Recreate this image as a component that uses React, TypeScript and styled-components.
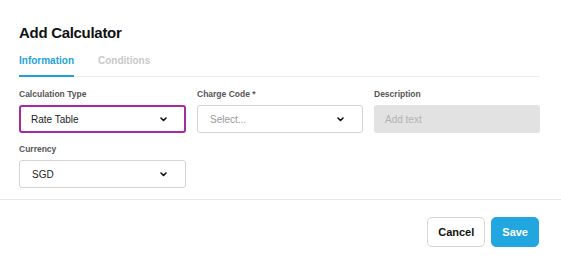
import React from 'react';
import styled, { createGlobalStyle } from 'styled-components';

const GlobalStyle = createGlobalStyle`
  body {
    margin: 0;
    background: #fff;
    font-family: "Liberation Sans", Arial, sans-serif;
  }
`;

const Modal = styled.div`
  width: 561px;
  height: 263px;
  background: #fff;
  display: flex;
  flex-direction: column;
`;

const Body = styled.div`
  padding: 23px 21px 0 19px;
  border-bottom: 1px solid #e6e6e6;
  height: 200px;
  box-sizing: border-box;
`;

const Title = styled.h1`
  margin: 0;
  font-size: 15px;
  letter-spacing: -0.3px;
  line-height: 20px;
  font-weight: 700;
  color: #111;
`;

const Tabs = styled.div`
  display: flex;
  gap: 24px;
  margin-top: 11px;
  border-bottom: 1px solid #ececec;
`;

const Tab = styled.div<{ $active?: boolean }>`
  font-size: 10px;
  font-weight: 700;
  line-height: 13px;
  padding-bottom: 8px;
  color: ${({ $active }) => ($active ? '#1ea2dc' : '#c9c9c9')};
  border-bottom: 2px solid ${({ $active }) => ($active ? '#1ea2dc' : 'transparent')};
  margin-bottom: -1px;
`;

const Grid = styled.div`
  display: grid;
  grid-template-columns: 167px 166px 166px;
  column-gap: 11px;
  row-gap: 11px;
  margin-top: 12px;
`;

const Field = styled.div`
  display: flex;
  flex-direction: column;
  gap: 5px;
`;

const Label = styled.label`
  font-size: 8.5px;
  font-weight: 700;
  line-height: 11px;
  color: #555;
`;

const SelectBox = styled.div<{ $focused?: boolean }>`
  height: 28px;
  box-sizing: border-box;
  display: flex;
  align-items: center;
  justify-content: space-between;
  padding: 0 ${({ $focused }) => ($focused ? '17px' : '18px')} 0 ${({ $focused }) => ($focused ? '10px' : '12px')};
  border: ${({ $focused }) => ($focused ? '2px solid #a42aa6' : '1px solid #d4d4d4')};
  border-radius: 3px;
  font-size: 10px;
  color: #1c1c1c;
  background: #fff;
`;

const Placeholder = styled.span`
  color: #9a9a9a;
`;

const TextInput = styled.div`
  height: 28px;
  box-sizing: border-box;
  display: flex;
  align-items: center;
  padding: 0 11px;
  border-radius: 3px;
  background: #e2e2e2;
  font-size: 10px;
  color: #b2b2b2;
`;

const Footer = styled.div`
  display: flex;
  justify-content: flex-end;
  gap: 6px;
  padding: 17px 22px 0 0;
`;

const Button = styled.button<{ $primary?: boolean }>`
  height: 30px;
  box-sizing: border-box;
  padding: 0 10px;
  border-radius: 5px;
  font-family: inherit;
  font-size: 11px;
  font-weight: 700;
  border: 1px solid ${({ $primary }) => ($primary ? '#22a6df' : '#d6d6d6')};
  background: ${({ $primary }) => ($primary ? '#22a6df' : '#fff')};
  color: ${({ $primary }) => ($primary ? '#fff' : '#111')};
`;

const Chevron = () => (
  <svg width="7" height="5" viewBox="0 0 7 5" fill="none">
    <path d="M1 1 3.5 3.5 6 1" stroke="#111" strokeWidth="1.6" strokeLinecap="round" strokeLinejoin="round" />
  </svg>
);

export default function App() {
  return (
    <Modal>
      <GlobalStyle />
      <Body>
        <Title>Add Calculator</Title>
        <Tabs>
          <Tab $active>Information</Tab>
          <Tab>Conditions</Tab>
        </Tabs>
        <Grid>
          <Field>
            <Label>Calculation Type</Label>
            <SelectBox $focused>
              <span>Rate Table</span>
              <Chevron />
            </SelectBox>
          </Field>
          <Field>
            <Label>Charge Code *</Label>
            <SelectBox>
              <Placeholder>Select...</Placeholder>
              <Chevron />
            </SelectBox>
          </Field>
          <Field>
            <Label>Description</Label>
            <TextInput>Add text</TextInput>
          </Field>
          <Field>
            <Label>Currency</Label>
            <SelectBox>
              <span>SGD</span>
              <Chevron />
            </SelectBox>
          </Field>
        </Grid>
      </Body>
      <Footer>
        <Button>Cancel</Button>
        <Button $primary>Save</Button>
      </Footer>
    </Modal>
  );
}
